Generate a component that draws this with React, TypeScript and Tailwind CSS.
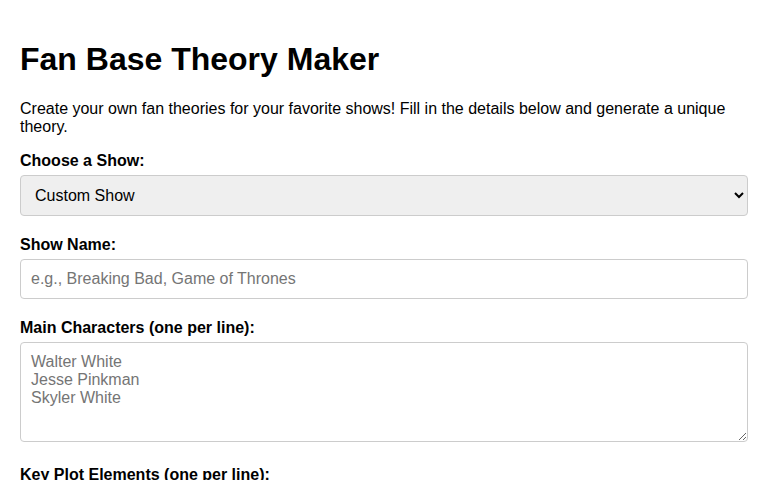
import { useState } from "react";

const shows = ["Custom Show", "Breaking Bad", "Game of Thrones", "Stranger Things", "The Office"];

export default function App() {
  const [show, setShow] = useState("Custom Show");
  const [name, setName] = useState("");
  const [characters, setCharacters] = useState("");

  return (
    <div className="min-h-screen bg-white p-5 font-['Liberation_Sans',Arial,sans-serif] text-base text-black">
      <h1 className="mt-[21px] mb-[22px] text-[32px] font-bold leading-[37px]">Fan Base Theory Maker</h1>
      <p className="mb-4 leading-[18px]">
        Create your own fan theories for your favorite shows! Fill in the details below and generate a unique
        theory.
      </p>

      <div className="mb-5">
        <label className="mb-[5px] block font-bold leading-[18px]">Choose a Show:</label>
        <select
          value={show}
          onChange={(e) => setShow(e.target.value)}
          className="block h-[41px] w-full rounded border border-[#ccc] bg-[#efefef] px-[10px] text-base"
        >
          {shows.map((s) => (
            <option key={s}>{s}</option>
          ))}
        </select>
      </div>

      <div className="mb-5">
        <label className="mb-[5px] block font-bold leading-[18px]">Show Name:</label>
        <input
          value={name}
          onChange={(e) => setName(e.target.value)}
          placeholder="e.g., Breaking Bad, Game of Thrones"
          className="block h-10 w-full rounded border border-[#ccc] px-[10px] text-base placeholder:text-[#757575]"
        />
      </div>

      <div className="mb-6">
        <label className="mb-[5px] block font-bold leading-[18px]">Main Characters (one per line):</label>
        <textarea
          value={characters}
          onChange={(e) => setCharacters(e.target.value)}
          placeholder={"Walter White\nJesse Pinkman\nSkyler White"}
          className="block h-[100px] w-full rounded border border-[#ccc] p-[10px] text-base leading-[18px] placeholder:text-[#757575]"
        />
      </div>

      <div className="mb-5">
        <label className="mb-[5px] block font-bold leading-[18px]">Key Plot Elements (one per line):</label>
        <textarea
          placeholder={"Blue meth\nCar wash\nLos Pollos Hermanos"}
          className="block h-[100px] w-full rounded border border-[#ccc] p-[10px] text-base leading-[18px] placeholder:text-[#757575]"
        />
      </div>
    </div>
  );
}
